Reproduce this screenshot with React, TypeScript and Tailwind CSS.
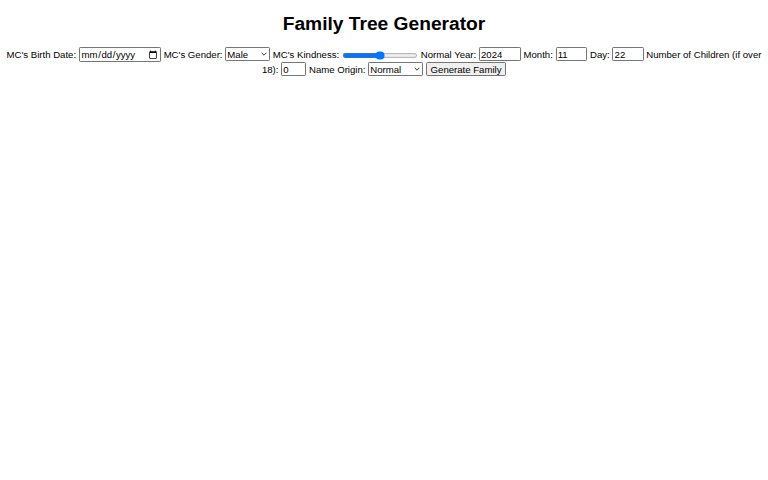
import { useState } from "react";

// the page is shown at 60%, so everything below is sized at 100% and zoomed
const field =
  "border border-[#767676] rounded-[2px] bg-white px-[2px] py-[1px] text-black leading-[normal]";

function Select({ width, options }: { width: string; options: string[] }) {
  return (
    <span className="relative inline-block">
      <select className={`${field} ${width} appearance-none pr-[16px]`}>
        {options.map((o) => (
          <option key={o}>{o}</option>
        ))}
      </select>
      <svg
        viewBox="0 0 10 6"
        className="pointer-events-none absolute right-[6px] top-1/2 -translate-y-1/2 w-[10px] h-[6px]"
        fill="none"
        stroke="#333"
        strokeWidth="1.6"
      >
        <path d="M1 1l4 4 4-4" />
      </svg>
    </span>
  );
}

export default function App() {
  const [kindness, setKindness] = useState(50);

  return (
    <div className="[zoom:0.6] min-h-screen bg-white px-2 text-[16px] leading-[normal] text-black font-['Liberation_Sans',Arial,sans-serif]">
      <h1 className="text-center text-[32px] font-bold leading-[37px] mt-[21.44px] mb-[19.5px]">
        Family Tree Generator
      </h1>
      <div className="text-center">
        <label>MC's Birth Date: </label>
        <input type="date" className={`${field} w-[137px]`} />{" "}
        <label>MC's Gender: </label>
        <Select width="w-[75px]" options={["Male", "Female"]} />{" "}
        <label>MC's Kindness: </label>
        <input
          type="range"
          min={0}
          max={100}
          value={kindness}
          onChange={(e) => setKindness(Number(e.target.value))}
          className="w-[127px] align-middle"
        />{" "}
        <label>Normal Year: </label>
        <input type="number" defaultValue={2024} className={`${field} w-[70px]`} />{" "}
        <label>Month: </label>
        <input type="number" defaultValue={11} className={`${field} w-[53px]`} />{" "}
        <label>Day: </label>
        <input type="number" defaultValue={22} className={`${field} w-[52px]`} />{" "}
        <label>Number of Children (if over 18): </label>
        <input type="number" defaultValue={0} className={`${field} w-[42px]`} />{" "}
        <label>Name Origin: </label>
        <Select width="w-[92px]" options={["Normal", "Fantasy"]} />{" "}
        <button className="border border-[#767676] rounded-[3px] bg-[#efefef] px-[6px] py-[1px] text-black leading-[normal]">
          Generate Family
        </button>
      </div>
    </div>
  );
}
